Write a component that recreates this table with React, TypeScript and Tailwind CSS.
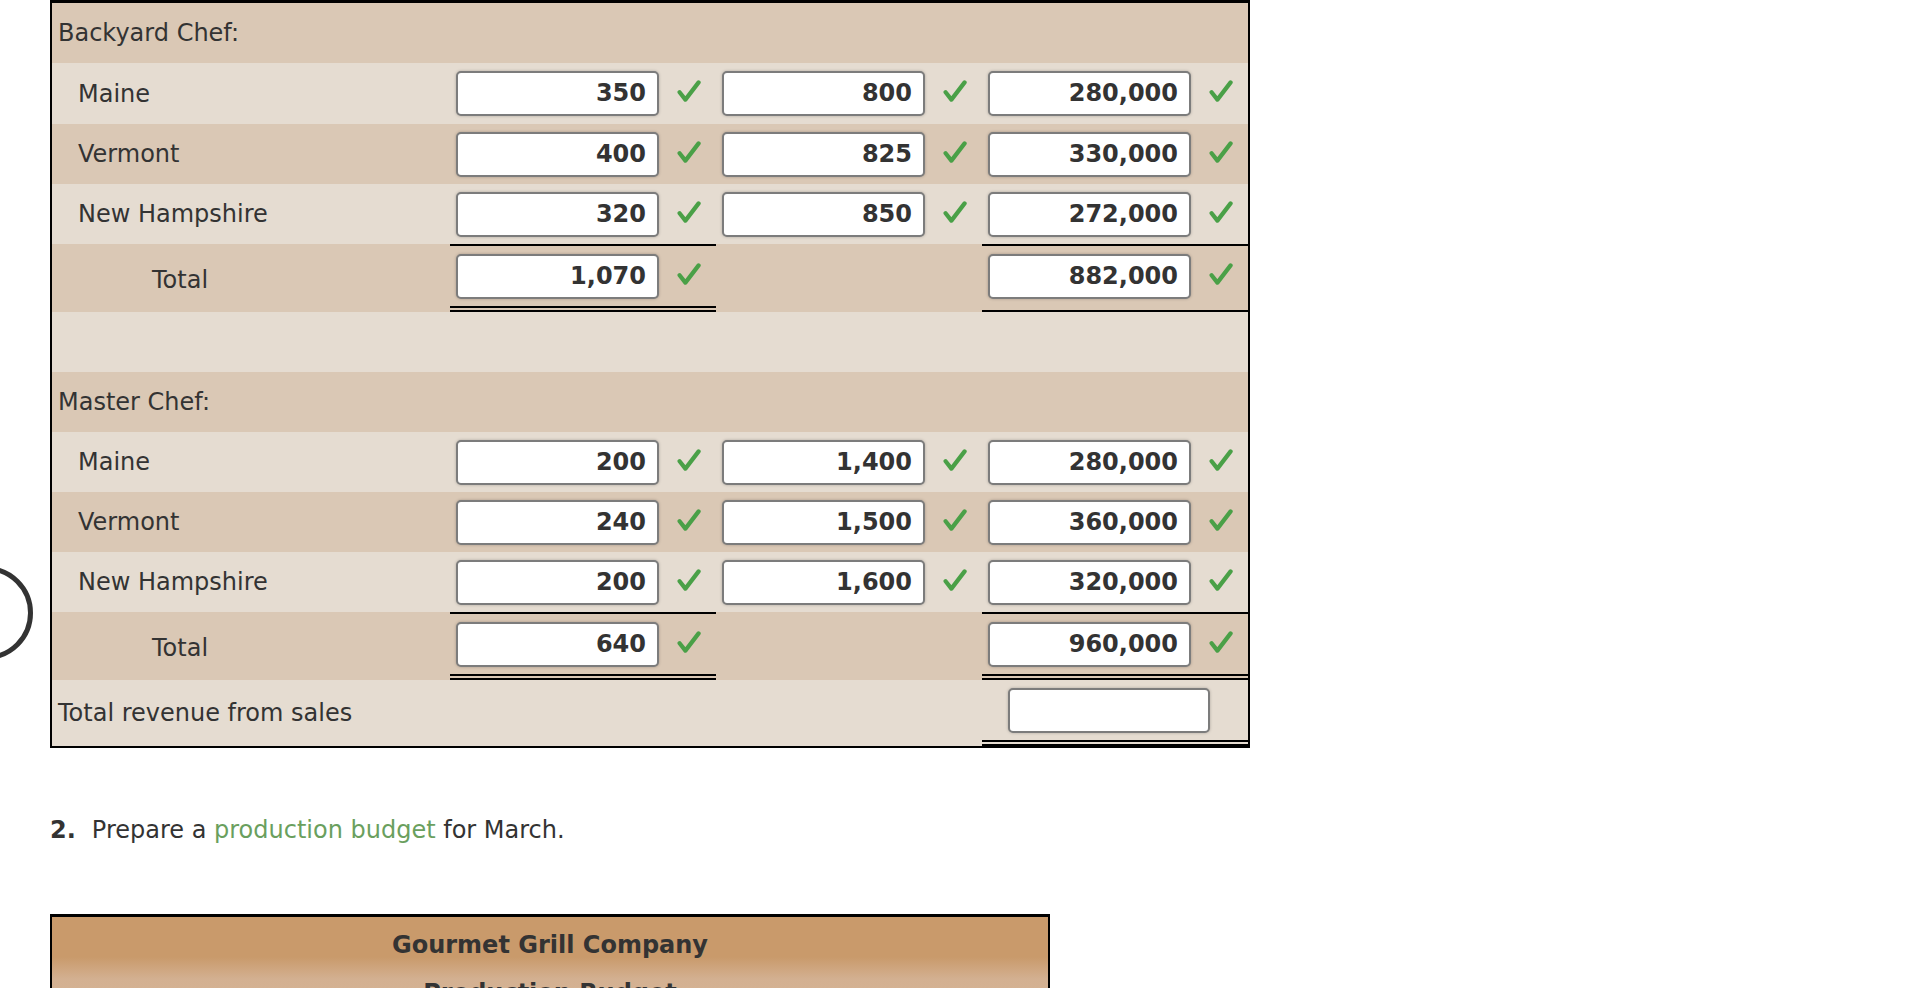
import React from "react";

const DARK = "bg-[#dac8b5]";
const LIGHT = "bg-[#e5dcd1]";

function Check() {
  return (
    <svg width="24" height="23" viewBox="0 0 24 23" className="shrink-0">
      <path
        d="M2.6 12.2 L8.4 19.6 L21.6 2.4"
        fill="none"
        stroke="#4aa047"
        strokeWidth="4.2"
        strokeLinecap="round"
        strokeLinejoin="round"
      />
    </svg>
  );
}

function NumBox({ value, w = "w-[203px]" }: { value?: string; w?: string }) {
  return (
    <div
      className={`${w} h-[45px] shrink-0 bg-white border-2 border-[#7c7c7c] rounded-[5px] shadow-[0_0_3px_rgba(0,0,0,0.25)] flex items-center justify-end pr-[11px] text-[24px] font-bold text-[#333]`}
    >
      {value}
    </div>
  );
}

type Cell = {
  value?: string;
  top?: boolean;
  bottom?: "single" | "double";
};

function ValueCell({ cell }: { cell?: Cell }) {
  if (!cell) return <div />;
  const topCls = cell.top ? "border-t-2 border-black" : "";
  const botCls =
    cell.bottom === "double"
      ? "border-b-[6px] border-double border-b-black"
      : cell.bottom === "single"
      ? "border-b-2 border-b-black"
      : "";
  return (
    <div className={`flex flex-col ${topCls} ${botCls}`}>
      {cell.value !== undefined ? (
        <div className="h-[60px] flex items-center pl-[6px]">
          <NumBox value={cell.value} />
          <div className="ml-[18px] mb-[3px]">
            <Check />
          </div>
        </div>
      ) : null}
    </div>
  );
}

function Row({
  bg,
  label,
  indent = 0,
  cells = [],
  h = "min-h-[60px]",
  labelCls = "",
}: {
  bg: string;
  label?: string;
  indent?: number;
  cells?: (Cell | undefined)[];
  h?: string;
  labelCls?: string;
}) {
  const pl = indent === 0 ? "pl-[6px]" : indent === 1 ? "pl-[26px]" : "pl-[100px]";
  return (
    <div className={`grid grid-cols-[398px_266px_266px_266px] ${bg} ${h}`}>
      <div className={`flex items-center ${pl} ${labelCls}`}>{label}</div>
      <ValueCell cell={cells[0]} />
      <ValueCell cell={cells[1]} />
      <ValueCell cell={cells[2]} />
    </div>
  );
}

export default function App() {
  return (
    <div className="relative w-full min-h-[988px] bg-white overflow-hidden font-['DejaVu_Sans',Verdana,sans-serif] text-[24px] text-[#333]">
      <div className="absolute left-[-61px] top-[566px] w-[94px] h-[94px] rounded-full border-[5px] border-[#333]" />

      <div className="ml-[50px] w-[1200px] border-2 border-t-[3px] border-black">
        <Row bg={DARK} label="Backyard Chef:" />
        <Row
          bg={LIGHT}
          h="min-h-[61px]"
          label="Maine"
          indent={1}
          cells={[{ value: "350" }, { value: "800" }, { value: "280,000" }]}
        />
        <Row
          bg={DARK}
          label="Vermont"
          indent={1}
          cells={[{ value: "400" }, { value: "825" }, { value: "330,000" }]}
        />
        <Row
          bg={LIGHT}
          label="New Hampshire"
          indent={1}
          cells={[{ value: "320" }, { value: "850" }, { value: "272,000" }]}
        />
        <Row
          bg={DARK}
          label="Total"
          indent={2}
          labelCls="pt-[3px]"
          cells={[
            { value: "1,070", top: true, bottom: "double" },
            undefined,
            { value: "882,000", top: true, bottom: "single" },
          ]}
        />
        <Row bg={LIGHT} />
        <Row bg={DARK} label="Master Chef:" />
        <Row
          bg={LIGHT}
          label="Maine"
          indent={1}
          cells={[{ value: "200" }, { value: "1,400" }, { value: "280,000" }]}
        />
        <Row
          bg={DARK}
          label="Vermont"
          indent={1}
          cells={[{ value: "240" }, { value: "1,500" }, { value: "360,000" }]}
        />
        <Row
          bg={LIGHT}
          label="New Hampshire"
          indent={1}
          cells={[{ value: "200" }, { value: "1,600" }, { value: "320,000" }]}
        />
        <Row
          bg={DARK}
          label="Total"
          indent={2}
          labelCls="pt-[3px]"
          cells={[
            { value: "640", top: true, bottom: "double" },
            undefined,
            { value: "960,000", top: true, bottom: "double" },
          ]}
        />
        <div className={`grid grid-cols-[398px_266px_266px_266px] ${LIGHT}`}>
          <div className="flex items-center pl-[6px]">Total revenue from sales</div>
          <div />
          <div />
          <div className="border-b-[6px] border-double border-b-black">
            <div className="h-[60px] flex items-center pl-[26px]">
              <NumBox w="w-[202px]" />
            </div>
          </div>
        </div>
      </div>

      <p className="ml-[50px] mt-[64px] leading-[36px]">
        <span className="font-bold mr-[16px]">2.</span>
        Prepare a <span className="text-[#6a9f5e]">production budget</span> for March.
      </p>

      <div className="ml-[50px] mt-[66px] w-[1000px] border-2 border-t-[3px] border-black">
        <div className="bg-[linear-gradient(to_bottom,#c99a6b_0px,#c99a6b_40px,#d3b091_62px,#d6b697_100%)] pt-[4px] text-center font-bold">
          <div className="leading-[48px]">Gourmet Grill Company</div>
          <div className="leading-[48px]">Production Budget</div>
        </div>
      </div>
    </div>
  );
}
